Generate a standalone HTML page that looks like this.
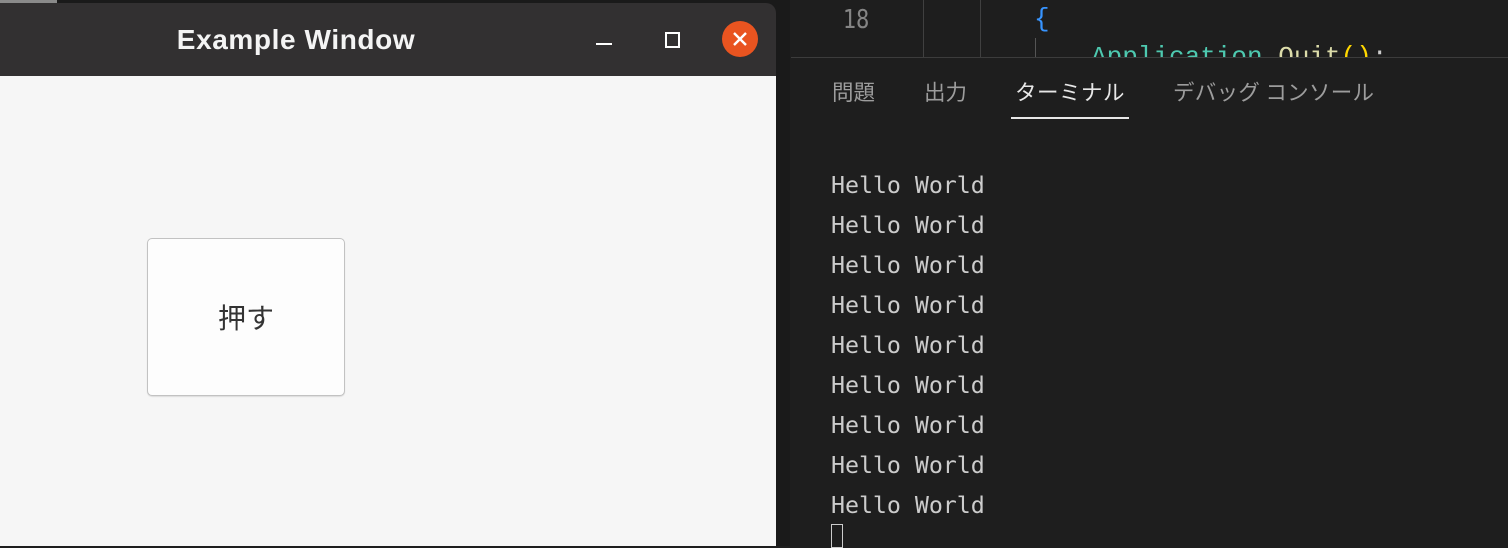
<!DOCTYPE html>
<html><head><meta charset="utf-8"><style>
body{margin:0;width:1508px;height:546px;background:#1e1e1e;position:relative;overflow:hidden;font-family:"Liberation Sans","Noto Sans CJK JP",sans-serif}
.a{position:absolute}
</style></head><body>
<div class="a" style="left:0;top:0;width:790px;height:546px;background:#1a1a1a"></div>
<div class="a" style="left:0;top:0;width:57px;height:3px;background:#8a8a8a"></div>
<div class="a" style="left:0;top:3px;width:776px;height:73px;background:#323031;border-top-right-radius:10px"></div>
<div class="a" style="left:0;top:76px;width:776px;height:470px;background:#f6f6f6"></div>
<div class="a" style="left:0;top:20px;width:592px;text-align:center;color:#f4f4f4;font-weight:bold;font-size:28px;line-height:40px;letter-spacing:0.6px">Example Window</div>
<div class="a" style="left:596px;top:43px;width:16px;height:2px;background:#fff"></div>
<div class="a" style="left:665px;top:32px;width:11px;height:12px;border:2px solid #fff"></div>
<div class="a" style="left:722px;top:21px;width:36px;height:36px;border-radius:50%;background:#e95420"></div>
<svg class="a" style="left:722px;top:21px" width="36" height="36"><path d="M12 12L24 24M24 12L12 24" stroke="#fff" stroke-width="2.4"/></svg>
<div class="a" style="left:147px;top:238px;width:196px;height:156px;background:#fdfdfd;border:1px solid #c2c2c2;border-radius:5px;box-shadow:0 1px 1px rgba(0,0,0,.1);text-align:center;line-height:156px;font-size:28px;color:#333;font-family:'Noto Sans CJK JP',sans-serif">押す</div>

<div class="a" style="left:791px;top:0;width:717px;height:57px;background:#1e1e1e"></div>
<div class="a" style="left:836px;top:5px;width:40px;text-align:center;color:#858585;font-size:26px;font-family:'DejaVu Sans Mono',monospace;transform:scaleX(0.85)">18</div>
<div class="a" style="left:923px;top:0;width:1px;height:57px;background:#404040"></div>
<div class="a" style="left:980px;top:0;width:1px;height:57px;background:#404040"></div>
<div class="a" style="left:1035px;top:38px;width:1px;height:19px;background:#555"></div>
<div class="a" style="left:1034px;top:4px;color:#3794ff;font-size:26px;font-family:'Liberation Mono',monospace">{</div>
<div class="a" style="left:1091px;top:42px;color:#4ec9b0;font-size:26px;font-family:'Liberation Mono',monospace;height:15px;overflow:hidden;line-height:30px">Application.<span style="color:#dcdcaa">Quit</span><span style="color:#ffd700">()</span><span style="color:#ccc">;</span></div>
<div class="a" style="left:791px;top:57px;width:717px;height:1px;background:#3c3c3c"></div>
<div class="a" style="top:78px;left:832px;font-size:21.5px;color:#9d9d9d;font-family:'Noto Sans CJK JP',sans-serif;line-height:28px">問題</div>
<div class="a" style="top:78px;left:924px;font-size:21.5px;color:#9d9d9d;font-family:'Noto Sans CJK JP',sans-serif;line-height:28px">出力</div>
<div class="a" style="top:78px;left:1015px;font-size:21.5px;color:#e7e7e7;font-family:'Noto Sans CJK JP',sans-serif;line-height:28px;letter-spacing:0.5px">ターミナル</div>
<div class="a" style="top:78px;left:1173px;font-size:21.5px;color:#9d9d9d;font-family:'Noto Sans CJK JP',sans-serif;line-height:28px;letter-spacing:0.3px">デバッグ コンソール</div>
<div class="a" style="left:1011px;top:117px;width:118px;height:2px;background:#e7e7e7"></div>
<div class="a" style="left:831px;top:166px;color:#cccccc;font-family:'DejaVu Sans Mono','Liberation Mono',monospace;font-size:23.3px;line-height:40px;white-space:pre;letter-spacing:-0.05px">Hello World
Hello World
Hello World
Hello World
Hello World
Hello World
Hello World
Hello World
Hello World</div>
<div class="a" style="left:831px;top:524px;width:12px;height:24px;border:1.5px solid #ccc;box-sizing:border-box"></div>
</body></html>
